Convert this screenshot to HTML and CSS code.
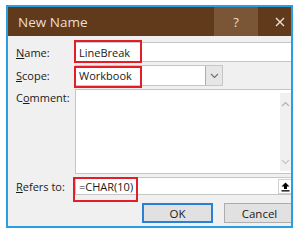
FILE: index.html
```html
<!DOCTYPE html>
<html>
<head>
    <title>New Name</title>
    <link rel="stylesheet" href="styles.css">
</head>
<body>
    <div class="window">
        <div class="titlebar">
            <span class="title">New Name</span>
            <span class="tbtn help">?</span>
            <span class="tbtn close">
                <svg width="10" height="10" viewBox="0 0 10 10"><path d="M1 1L9 9M9 1L1 9" stroke="#eadfd3" stroke-width="1.4" fill="none"/></svg>
            </span>
        </div>

        <div class="body">
            <div class="form">
                <label class="lbl"><u>N</u>ame:</label>
                <div class="field">
                    <span class="val">LineBreak</span>
                    <span class="mark mark-name"></span>
                </div>

                <label class="lbl"><u>S</u>cope:</label>
                <div class="field select">
                    <span class="val">Workbook</span>
                    <span class="drop">
                        <svg width="9" height="6" viewBox="0 0 9 6"><path d="M1 1L4.5 4.5L8 1" stroke="#707070" stroke-width="1.1" fill="none"/></svg>
                    </span>
                    <span class="mark mark-scope"></span>
                </div>

                <label class="lbl top">C<u>o</u>mment:</label>
                <div class="field memo">
                    <div class="scrollbar">
                        <svg width="9" height="6" viewBox="0 0 9 6"><path d="M1 5L4.5 1.5L8 5" stroke="#b0b0b0" stroke-width="1.1" fill="none"/></svg>
                        <svg width="9" height="6" viewBox="0 0 9 6"><path d="M1 1L4.5 4.5L8 1" stroke="#c4c4c4" stroke-width="1.1" fill="none"/></svg>
                    </div>
                </div>

                <label class="lbl"><u>R</u>efers to:</label>
                <div class="field refers">
                    <span class="val">=CHAR(10)</span>
                    <span class="collapse">
                        <svg width="9" height="10" viewBox="0 0 9 10"><path d="M4.5 0.5L8.5 4.5H6V7H3V4.5H0.5Z" fill="#000"/><rect x="0.5" y="8.2" width="8" height="1.3" fill="#000"/></svg>
                    </span>
                    <span class="mark mark-refers"></span>
                </div>
            </div>

            <div class="buttons">
                <button class="btn default">OK</button>
                <button class="btn">Cancel</button>
            </div>
        </div>
    </div>
</body>
</html>
```

FILE: styles.css
```css
body { margin: 0; background: #fff; font-family: "Segoe UI", "Open Sans", "Noto Sans", sans-serif; color: #1a1a1a; }
.window {
    margin: 5px 0 0 6px;
    width: 287px;
    height: 223px;
    box-sizing: border-box;
    border: 2px solid #2a9fe0;
    background: #f0f0f0;
    overflow: hidden;
    display: flex;
    flex-direction: column;
}
.titlebar {
    height: 29px;
    flex-shrink: 0;
    background: #603a1b;
    color: #eadfd3;
    display: flex;
}
.title { flex: 1; align-self: center; padding-left: 10px; font-size: 13.5px; }
.tbtn {
    width: 44px;
    flex-shrink: 0;
    display: flex;
    align-items: center;
    justify-content: center;
}
.help { background: #7a5637; font-size: 13px; }
.close { margin-right: -11px; }

.body { padding: 6px 0 0 8px; }
.form {
    display: grid;
    grid-template-columns: 59px 1fr;
    grid-template-rows: 20px 21px 85px 18px;
    row-gap: 3px;
}
.lbl { font-size: 11px; align-self: center; }
.lbl.top { align-self: start; padding-top: 1px; }
.lbl u { text-decoration-thickness: 1px; text-underline-offset: 1px; }

.field {
    position: relative;
    box-sizing: border-box;
    background: #fff;
    border: 1px solid #c6c6c6;
    border-right: none;
    display: flex;
    align-items: center;
    font-size: 11px;
}
.val { padding-left: 3px; }
.select { width: 148px; border-right: 1px solid #c6c6c6; }
.select .val { flex: 1; }
.drop {
    width: 17px;
    height: 100%;
    box-sizing: border-box;
    background: #e6e6e6;
    border-left: 1px solid #adadad;
    display: flex;
    align-items: center;
    justify-content: center;
}
.memo { justify-content: flex-end; align-items: stretch; }
.scrollbar {
    width: 11px;
    margin: 3px 0 2px;
    background: #f0f0f0;
    display: flex;
    flex-direction: column;
    justify-content: space-between;
    align-items: center;
    padding: 8px 0 6px;
}
.refers .val { flex: 1; }
.collapse {
    align-self: flex-end;
    width: 12px;
    height: 13px;
    background: #fff;
    border: 1px solid #d0d0d0;
    border-right: none;
    display: flex;
    align-items: center;
    justify-content: center;
}

.mark {
    position: absolute;
    box-sizing: border-box;
    border: 2px solid #e31e26;
}
.mark-name { left: -2px; top: -3px; width: 68px; height: 23px; }
.mark-scope { left: -2px; top: 0; width: 68px; height: 22px; }
.mark-refers { left: -3px; top: -1px; width: 65px; height: 25px; }

.buttons { display: flex; gap: 11px; padding-left: 126px; margin-top: 8px; }
.btn {
    width: 71px;
    height: 20px;
    flex-shrink: 0;
    box-sizing: border-box;
    background: #e1e1e1;
    border: 1px solid #adadad;
    font-family: inherit;
    font-size: 11.5px;
    color: #1a1a1a;
    padding: 0;
}
.btn.default { border: 2px solid #2b7fd4; }
```
